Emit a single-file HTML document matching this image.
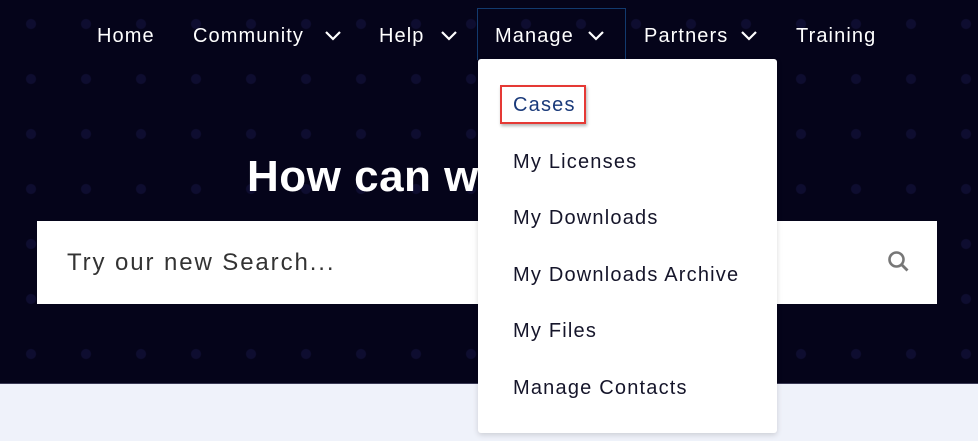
<!DOCTYPE html>
<html><head><style>
*{margin:0;padding:0;box-sizing:border-box}
body{width:978px;height:441px;overflow:hidden;background:#eff2fa;font-family:"Liberation Sans",sans-serif;position:relative}
.hero{position:absolute;left:0;top:0;width:978px;height:384px;background-color:#05041a;
background-image:radial-gradient(circle,#0e0d30 0 4.5px,transparent 5.5px);background-size:55px 55px;background-position:3.5px -3.5px;border-bottom:1px solid #3a3a55}
.nav{position:absolute;top:25px;color:#fff;font-size:20px;letter-spacing:1.1px;white-space:nowrap}
.chev{position:absolute;top:30px}
.mbox{position:absolute;left:477px;top:8px;width:149px;height:52px;border:1px solid #123a6e;border-bottom:none}
h1{position:absolute;left:247px;top:152px;color:#fff;font-size:44px;font-weight:bold;letter-spacing:0.5px}
.search{position:absolute;left:37px;top:221px;width:900px;height:83px;background:#fff}
.search span{position:absolute;left:30px;top:28px;font-size:24px;color:#333;letter-spacing:1.9px}
.dd{position:absolute;left:478px;top:59px;width:299px;height:374px;background:#fff;border-radius:3px;box-shadow:0 2px 6px rgba(0,0,0,.15)}
.it{position:absolute;left:35px;font-size:20px;color:#15152a;letter-spacing:1.2px;white-space:nowrap}
.cases{position:absolute;left:22px;top:26px;width:86px;height:39px;border:2px solid #e53935;box-shadow:1px 2px 3px rgba(0,0,0,.3)}
</style></head><body>
<div class="hero"></div>
<div class="nav" style="left:97px">Home</div>
<div class="nav" style="left:193px">Community</div>
<svg class="chev" style="left:324px" width="18" height="11"><path d="M2 2l7 7 7-7" stroke="#fff" stroke-width="2.2" fill="none"/></svg>
<div class="nav" style="left:379px">Help</div>
<svg class="chev" style="left:440px" width="18" height="11"><path d="M2 2l7 7 7-7" stroke="#fff" stroke-width="2.2" fill="none"/></svg>
<div class="mbox"></div>
<div class="nav" style="left:495px">Manage</div>
<svg class="chev" style="left:587px" width="18" height="11"><path d="M2 2l7 7 7-7" stroke="#fff" stroke-width="2.2" fill="none"/></svg>
<div class="nav" style="left:644px">Partners</div>
<svg class="chev" style="left:740px" width="18" height="11"><path d="M2 2l7 7 7-7" stroke="#fff" stroke-width="2.2" fill="none"/></svg>
<div class="nav" style="left:796px">Training</div>
<h1>How can we help?</h1>
<div class="search"><span>Try our new Search...</span>
<svg style="position:absolute;left:850px;top:29px" width="24" height="24"><circle cx="9.5" cy="9.5" r="7" stroke="#777" stroke-width="2.6" fill="none"/><path d="M14.5 14.5l6 6" stroke="#777" stroke-width="2.8"/></svg></div>
<div class="dd">
<div class="cases"></div>
<div class="it" style="top:35px;color:#1a3a7a">Cases</div>
<div class="it" style="top:92px">My Licenses</div>
<div class="it" style="top:148px">My Downloads</div>
<div class="it" style="top:205px">My Downloads Archive</div>
<div class="it" style="top:261px">My Files</div>
<div class="it" style="top:318px">Manage Contacts</div>
</div>
</body></html>
